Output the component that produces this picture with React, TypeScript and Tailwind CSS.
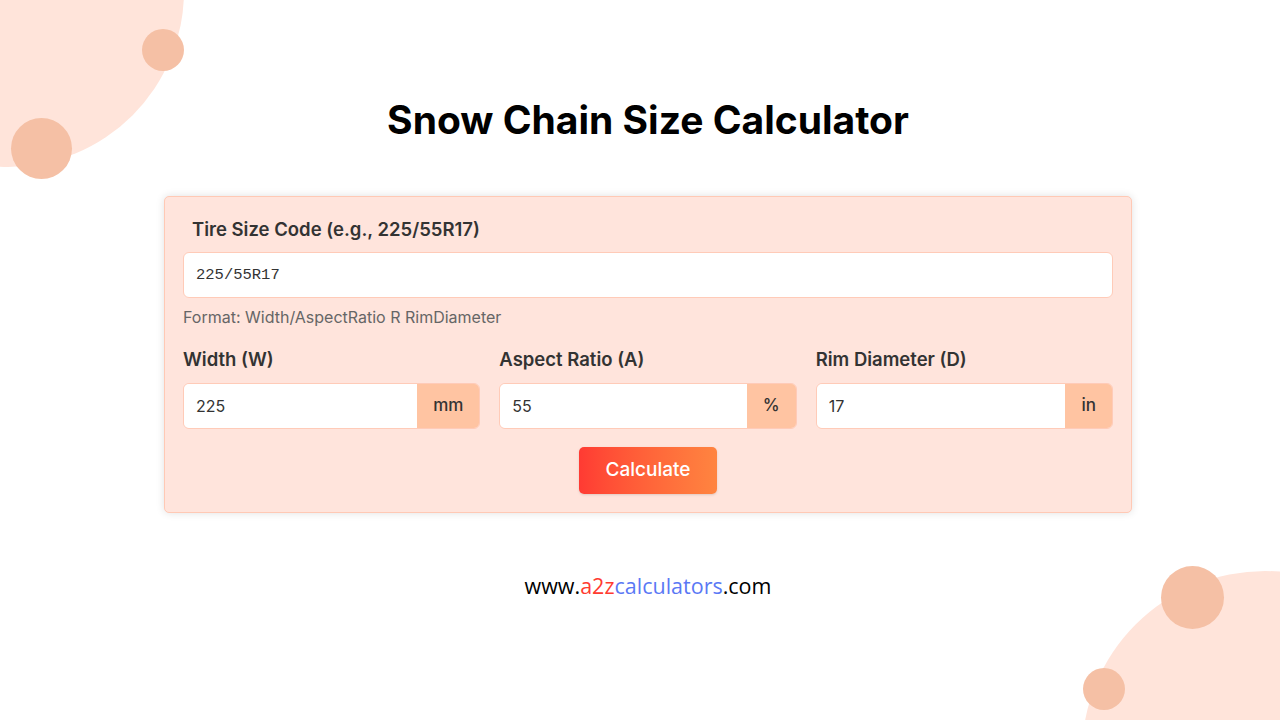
import React, { useState } from 'react';

interface Field {
  id: string;
  label: string;
  value: string;
  unit: string;
}

const fields: Field[] = [
  { id: 'width', label: 'Width (W)', value: '225', unit: 'mm' },
  { id: 'aspect', label: 'Aspect Ratio (A)', value: '55', unit: '%' },
  { id: 'rim', label: 'Rim Diameter (D)', value: '17', unit: 'in' },
];

const App: React.FC = () => {
  const [code, setCode] = useState<string>('225/55R17');
  const [values, setValues] = useState<Record<string, string>>({ width: '225', aspect: '55', rim: '17' });

  return (
    <div className="relative w-full h-[720px] overflow-hidden bg-white font-['Inter',sans-serif]">
      {/* decorative blobs */}
      <div className="absolute left-[-168px] top-[-185px] w-[352px] h-[352px] rounded-full bg-[#ffe4da]" />
      <div className="absolute left-[142px] top-[29px] w-[42px] h-[42px] rounded-full bg-[#f5c0a5]" />
      <div className="absolute left-[11px] top-[118px] w-[61px] h-[61px] rounded-full bg-[#f5c0a5]" />
      <div className="absolute left-[1082px] top-[571px] w-[366px] h-[366px] rounded-full bg-[#ffe4da]" />
      <div className="absolute left-[1161px] top-[566px] w-[63px] h-[63px] rounded-full bg-[#f5c0a5]" />
      <div className="absolute left-[1083px] top-[668px] w-[42px] h-[42px] rounded-full bg-[#f5c0a5]" />

      <div className="relative pl-4 pt-[96px]">
        <h1 className="text-center text-[39px] leading-[48px] font-bold text-black">Snow Chain Size Calculator</h1>

        <div className="w-[968px] mx-auto mt-[52px] bg-[#ffe4dc] border border-[#ffc9b5] rounded-[5px] shadow-[0_0_8px_rgba(0,0,0,0.12)] px-[18px] pt-[20px] pb-[18px]">
          <label className="block pl-[9px] text-[18.5px] leading-[24px] font-semibold text-[#333]">Tire Size Code (e.g., 225/55R17)</label>
          <input
            type="text"
            value={code}
            onChange={(e) => setCode(e.target.value)}
            className="mt-[11px] w-full h-[46px] px-3 bg-white border border-[#ffcbb8] rounded-md font-['Liberation_Mono',monospace] text-[15.5px] text-[#333] outline-none"
          />
          <p className="mt-[9px] text-[16px] leading-[20px] text-[#666]">Format: Width/AspectRatio R RimDiameter</p>

          <div className="grid grid-cols-3 gap-[19px] mt-[20px]">
            {fields.map((f) => (
              <div key={f.id}>
                <label className="block text-[18.5px] leading-[24px] font-semibold text-[#333]">{f.label}</label>
                <div className="mt-[12px] flex h-[46px] border border-[#ffcbb8] rounded-md overflow-hidden">
                  <input
                    type="text"
                    value={values[f.id]}
                    onChange={(e) => setValues({ ...values, [f.id]: e.target.value })}
                    className="flex-1 min-w-0 px-3 bg-white text-[16px] text-[#333] outline-none"
                  />
                  <span className="flex items-center px-4 bg-[#ffc4a2] text-[17px] font-medium text-[#333]">{f.unit}</span>
                </div>
              </div>
            ))}
          </div>

          <div className="flex justify-center mt-[18px]">
            <button className="w-[138px] h-[47px] rounded-[5px] bg-gradient-to-r from-[#ff3a33] to-[#ff8440] text-white text-[19px] font-medium shadow-sm">
              Calculate
            </button>
          </div>
        </div>

        <p className="mt-[59px] text-center text-[21.5px] leading-[28px] font-['Open_Sans',sans-serif] text-black">
          www.<span className="text-[#ff3b30]">a2z</span><span className="text-[#5a78f5]">calculators</span>.com
        </p>
      </div>
    </div>
  );
};

export default App;
